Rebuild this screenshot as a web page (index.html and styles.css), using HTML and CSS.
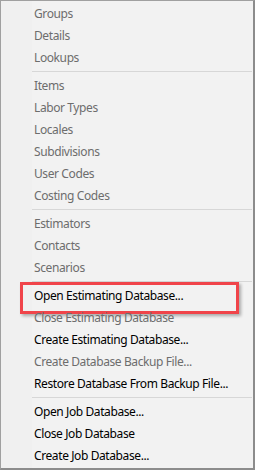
FILE: index.html
```html
<!DOCTYPE html>
<html lang="en">
<head>
    <meta charset="UTF-8">
    <meta name="viewport" content="width=device-width, initial-scale=1.0">
    <title>Menu</title>
    <link rel="stylesheet" href="styles.css">
</head>
<body>
    <div class="menu">
        <ul>
            <li class="off">Groups</li>
            <li class="off">Details</li>
            <li class="off">Lookups</li>
            <li class="sep"></li>
            <li class="off">Items</li>
            <li class="off">Labor Types</li>
            <li class="off">Locales</li>
            <li class="off">Subdivisions</li>
            <li class="off">User Codes</li>
            <li class="off">Costing Codes</li>
            <li class="sep"></li>
            <li class="off">Estimators</li>
            <li class="off">Contacts</li>
            <li class="off">Scenarios</li>
            <li class="sep"></li>
            <li class="mark">Open Estimating Database...</li>
            <li class="off">Close Estimating Database</li>
            <li>Create Estimating Database...</li>
            <li class="off">Create Database Backup File...</li>
            <li>Restore Database From Backup File...</li>
            <li class="sep"></li>
            <li>Open Job Database...</li>
            <li>Close Job Database</li>
            <li>Create Job Database...</li>
        </ul>
    </div>
</body>
</html>
```

FILE: styles.css
```css
*{
    margin: 0;
    padding: 0;
    box-sizing: border-box;
}
body{
    width: 255px;
    height: 470px;
    background: #f0f0f0;
    font-family: "Noto Sans", "Open Sans", sans-serif;
    font-size: 12px;
    letter-spacing: -0.4px;
}
.menu{
    width: 255px;
    height: 470px;
    background: #f2f2f2;
    border: 1px solid #a0a0a0;
    border-right: 2px solid #8c8c8c;
    border-bottom: 2px solid #8c8c8c;
    padding-top: 2px;
    background-image: linear-gradient(to right, #f0f0f0 31px, #f2f2f2 31px);
}
.menu ul{
    list-style: none;
}
.menu li{
    height: 22px;
    line-height: 22px;
    padding-left: 33px;
    color: #000;
    white-space: nowrap;
    position: relative;
}
.menu li.off{
    color: #6d6d6d;
}
.menu li.sep{
    height: 6px;
    margin-left: 31px;
    margin-right: 1px;
    padding: 0;
    border-top: 2px solid transparent;
}
.menu li.sep::after{
    content: "";
    display: block;
    height: 1px;
    background: #d7d7d7;
}
.menu li.mark::before{
    content: "";
    position: absolute;
    left: 19px;
    top: -3px;
    width: 213px;
    height: 26px;
    border: 3px solid #f0444a;
    box-shadow: 2px 2px 3px rgba(0, 0, 0, 0.3);
}
```
